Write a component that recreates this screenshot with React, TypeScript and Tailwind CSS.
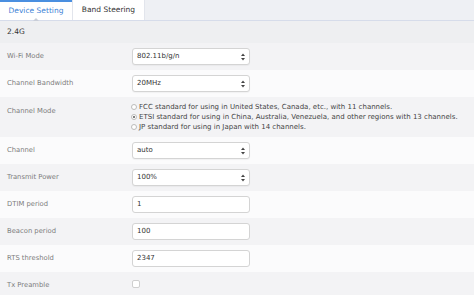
const font = { fontFamily: '"DejaVu Sans", Verdana, sans-serif' };

function Arrows() {
  return (
    <svg width="4" height="8" viewBox="0 0 4 8" className="absolute right-[4px] top-1/2 -translate-y-1/2">
      <path d="M0 3 L2 0.5 L4 3 Z" fill="#444" />
      <path d="M0 5 L2 7.5 L4 5 Z" fill="#444" />
    </svg>
  );
}

function Select({ value }: { value: string }) {
  return (
    <div className="relative flex h-[17px] w-[118px] items-center rounded-[3px] border border-[#d4d4d4] bg-white pl-[4px] text-[7px] text-[#333] shadow-[0_1px_1px_rgba(0,0,0,0.04)]">
      {value}
      <Arrows />
    </div>
  );
}

function Input({ value }: { value: string }) {
  return (
    <div className="flex h-[17px] w-[118px] items-center rounded-[3px] border border-[#d4d4d4] bg-white pl-[4px] text-[7px] text-[#333]">
      {value}
    </div>
  );
}

function Row({
  label,
  gray,
  children,
  h = "h-[27px]",
  pt = "pt-[8px]",
}: {
  label: string;
  gray?: boolean;
  children: React.ReactNode;
  h?: string;
  pt?: string;
}) {
  return (
    <div className={`flex items-center ${h} ${gray ? "bg-[#f3f3f5]" : "bg-[#fbfbfc]"}`}>
      <div className={`w-[132px] shrink-0 self-start pl-[7px] ${pt} text-[6.8px] text-[#7d7d7d]`}>{label}</div>
      {children}
    </div>
  );
}

function Radio({ checked, text }: { checked?: boolean; text: string }) {
  return (
    <div className="flex h-[10px] items-center gap-[2px] whitespace-nowrap leading-[10px]">
      <span className="flex h-[6px] w-[6px] items-center justify-center rounded-full border border-[#bbb] bg-white">
        {checked && <span className="h-[2px] w-[2px] rounded-full bg-[#555]" />}
      </span>
      <span>{text}</span>
    </div>
  );
}

export default function App() {
  return (
    <div className="h-[304px] w-[474px] overflow-hidden bg-white" style={font}>
      {/* tabs */}
      <div className="flex h-[21px] border-b border-[#d6dcea] bg-[#eef0f4]">
        <div className="relative flex w-[72px] items-center justify-center border-t-2 border-[#4a8fe0] bg-white text-[7.5px] text-[#3d7fd6]">
          Device Setting
          <span className="absolute bottom-[-1px] left-[33px] h-0 w-0 border-x-[3px] border-b-[3px] border-x-transparent border-b-[#c9ced8]" />
        </div>
        <div className="flex w-[73px] items-center justify-center border-x border-[#e2e5ec] bg-white text-[7.5px] text-[#333]">
          Band Steering
        </div>
      </div>
      {/* section */}
      <div className="flex h-[22px] items-center bg-[#eeeff1] pl-[7px] text-[7.5px] text-[#333]">2.4G</div>
      <Row label="Wi-Fi Mode" gray>
        <Select value="802.11b/g/n" />
      </Row>
      <Row label="Channel Bandwidth">
        <Select value="20MHz" />
      </Row>
      <Row label="Channel Mode" gray h="h-[40px]" pt="pt-[9px]">
        <div className="-ml-[1px] flex flex-col text-[7px] text-[#444]">
          <Radio text="FCC standard for using in United States, Canada, etc., with 11 channels." />
          <Radio checked text="ETSI standard for using in China, Australia, Venezuela, and other regions with 13 channels." />
          <Radio text="JP standard for using in Japan with 14 channels." />
        </div>
      </Row>
      <Row label="Channel">
        <Select value="auto" />
      </Row>
      <Row label="Transmit Power" gray>
        <Select value="100%" />
      </Row>
      <Row label="DTIM period">
        <Input value="1" />
      </Row>
      <Row label="Beacon period" gray>
        <Input value="100" />
      </Row>
      <Row label="RTS threshold">
        <Input value="2347" />
      </Row>
      <Row label="Tx Preamble" gray h="h-[23px]">
        <div className="h-[8px] w-[8px] rounded-[2px] border border-[#cfcfcf] bg-white" />
      </Row>
    </div>
  );
}
